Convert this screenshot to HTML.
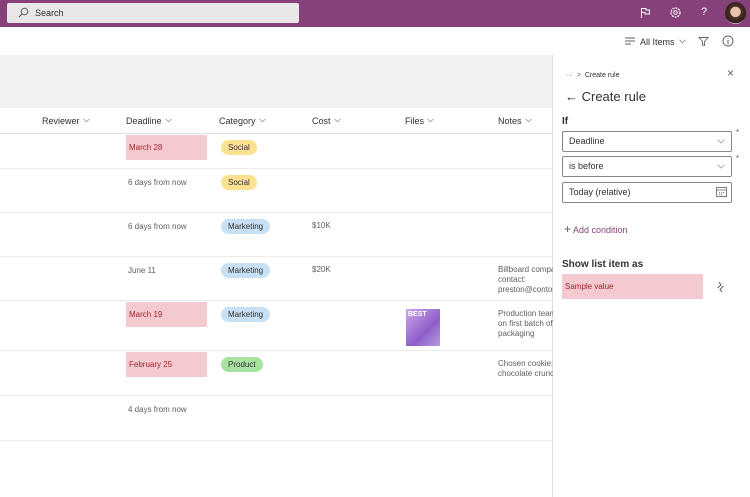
<!DOCTYPE html>
<html><head><meta charset="utf-8"><style>
*{margin:0;padding:0;box-sizing:border-box}
body{width:750px;height:497px;overflow:hidden;background:#fff;font-family:"Liberation Sans",sans-serif;position:relative;color:#323130}
.a{position:absolute}
.t{font-size:8px;color:#605e5c;position:absolute;white-space:nowrap}
.h{font-size:9px;color:#323130;position:absolute;white-space:nowrap}
.h svg{margin-left:3px;vertical-align:1px}
.line{position:absolute;left:0;width:552px;height:1px;background:#edebe9}
.pink{position:absolute;left:126px;width:81px;height:25px;background:#f4c9cf}
.pinkt{position:absolute;font-size:8px;color:#a4262c}
.pill{position:absolute;height:15px;border-radius:8px;font-size:8px;line-height:15px;padding:0 7px;color:#323130}
.y{background:#fce290}.b{background:#c7e0f4}.g{background:#a7e3a0}
.box{position:absolute;left:562px;width:170px;height:21px;border:1px solid #8a8886;border-radius:2px;font-size:9px;line-height:19px;padding-left:6px;color:#323130}
.chev{position:absolute;right:6px;top:7px}
</style></head><body>
<div class="a" style="left:0;top:0;width:750px;height:27px;background:#86407a"></div>
<div class="a" style="left:7px;top:3px;width:292px;height:20px;background:#e8e6e6;border-radius:2px"></div>
<svg class="a" style="left:18px;top:7px" width="11" height="11" viewBox="0 0 11 11"><circle cx="6.5" cy="4.5" r="3.3" fill="none" stroke="#605e5c" stroke-width="1"/><path d="M4 7 L1 10" stroke="#605e5c" stroke-width="1.1"/></svg>
<div class="a" style="left:35px;top:8px;font-size:9px;color:#323130">Search</div>
<svg class="a" style="left:640px;top:7px" width="11" height="12" viewBox="0 0 11 12"><path d="M1.5 1 V11 M1.5 1.5 H6 V3 H9.5 V7 H5 V5.5 H1.5" fill="none" stroke="#fff" stroke-width="1"/></svg>
<svg class="a" style="left:669px;top:6px" width="13" height="13" viewBox="0 0 13 13"><circle cx="6.5" cy="6.5" r="4.5" fill="none" stroke="#fff" stroke-width="1.3" stroke-dasharray="2 1"/><circle cx="6.5" cy="6.5" r="1.8" fill="none" stroke="#fff" stroke-width="1"/></svg>
<div class="a" style="left:701px;top:6px;font-size:11px;color:#fff">?</div>
<div class="a" style="left:725px;top:2px;width:21px;height:22px;border-radius:50%;background:radial-gradient(circle at 50% 45%,#e8c4b0 0 30%,#4a3028 35%,#2e1e18 70%,#ddd 72%)"></div>
<svg class="a" style="left:625px;top:37px" width="11" height="9" viewBox="0 0 11 9"><path d="M0 1H10M0 4H10M0 7H6" stroke="#605e5c" stroke-width="0.9"/></svg>
<div class="a" style="left:640px;top:37px;font-size:9px;color:#323130;white-space:nowrap">All Items <svg width="7" height="5" viewBox="0 0 7 5" style="margin-left:2px;vertical-align:1px"><path d="M0.5 0.8L3.5 3.8L6.5 0.8" fill="none" stroke="#8a8886" stroke-width="0.8"/></svg></div>
<svg class="a" style="left:698px;top:36px" width="11" height="11" viewBox="0 0 11 11"><path d="M1 1.5H10L6.5 5.5V9.5L4.5 9V5.5Z" fill="none" stroke="#605e5c" stroke-width="0.9"/></svg>
<svg class="a" style="left:722px;top:35px" width="12" height="12" viewBox="0 0 12 12"><circle cx="6" cy="6" r="5" fill="none" stroke="#605e5c" stroke-width="0.9"/><path d="M6 5V9M6 3.2V4" stroke="#605e5c"/></svg>
<div class="a" style="left:0;top:55px;width:552px;height:53px;background:#f3f2f1"></div>
<div class="a" style="left:552px;top:55px;width:1px;height:442px;background:#e1dfdd"></div>
<div class="h" style="left:42px;top:116px">Reviewer<svg width="7" height="5" viewBox="0 0 7 5"><path d="M0.5 0.8L3.5 3.8L6.5 0.8" fill="none" stroke="#a19f9d" stroke-width="0.8"/></svg></div>
<div class="h" style="left:126px;top:116px">Deadline<svg width="7" height="5" viewBox="0 0 7 5"><path d="M0.5 0.8L3.5 3.8L6.5 0.8" fill="none" stroke="#a19f9d" stroke-width="0.8"/></svg></div>
<div class="h" style="left:219px;top:116px">Category<svg width="7" height="5" viewBox="0 0 7 5"><path d="M0.5 0.8L3.5 3.8L6.5 0.8" fill="none" stroke="#a19f9d" stroke-width="0.8"/></svg></div>
<div class="h" style="left:312px;top:116px">Cost<svg width="7" height="5" viewBox="0 0 7 5"><path d="M0.5 0.8L3.5 3.8L6.5 0.8" fill="none" stroke="#a19f9d" stroke-width="0.8"/></svg></div>
<div class="h" style="left:405px;top:116px">Files<svg width="7" height="5" viewBox="0 0 7 5"><path d="M0.5 0.8L3.5 3.8L6.5 0.8" fill="none" stroke="#a19f9d" stroke-width="0.8"/></svg></div>
<div class="h" style="left:498px;top:116px">Notes<svg width="7" height="5" viewBox="0 0 7 5"><path d="M0.5 0.8L3.5 3.8L6.5 0.8" fill="none" stroke="#a19f9d" stroke-width="0.8"/></svg></div>
<div class="line" style="top:133px;background:#e1dfdd"></div>
<div class="line" style="top:168px"></div><div class="line" style="top:212px"></div><div class="line" style="top:256px"></div><div class="line" style="top:300px"></div><div class="line" style="top:350px"></div><div class="line" style="top:395px"></div><div class="line" style="top:440px"></div>
<div class="pink" style="top:135px"></div><div class="pinkt" style="left:129px;top:143px">March 28</div>
<div class="pill y" style="left:221px;top:140px">Social</div>
<div class="t" style="left:128px;top:178px">6 days from now</div>
<div class="pill y" style="left:221px;top:175px">Social</div>
<div class="t" style="left:128px;top:222px">6 days from now</div>
<div class="pill b" style="left:221px;top:219px">Marketing</div>
<div class="t" style="left:312px;top:221px">$10K</div>
<div class="t" style="left:128px;top:266px">June 11</div>
<div class="pill b" style="left:221px;top:263px">Marketing</div>
<div class="t" style="left:312px;top:265px">$20K</div>
<div class="t" style="left:498px;top:265px;line-height:10px">Billboard compa<br>contact:<br>preston@contos</div>
<div class="pink" style="top:302px"></div><div class="pinkt" style="left:129px;top:310px">March 19</div>
<div class="pill b" style="left:221px;top:307px">Marketing</div>
<div class="a" style="left:406px;top:309px;width:34px;height:37px;background:linear-gradient(135deg,#c9a8e8,#8e5fc9 60%,#b89be0);color:#fff;font-size:7px;font-weight:bold;padding:2px">BEST</div>
<div class="t" style="left:498px;top:309px;line-height:10px">Production team<br>on first batch of<br>packaging</div>
<div class="pink" style="top:352px"></div><div class="pinkt" style="left:129px;top:360px">February 25</div>
<div class="pill g" style="left:221px;top:357px">Product</div>
<div class="t" style="left:498px;top:359px;line-height:10px">Chosen cookie: I<br>chocolate crunc</div>
<div class="t" style="left:128px;top:405px">4 days from now</div>
<div class="a" style="left:553px;top:55px;width:197px;height:442px;background:#fff"></div>
<div class="a" style="left:566px;top:72px;font-size:7px;color:#323130;white-space:nowrap"><span style="color:#605e5c">···&nbsp;&nbsp;&gt;&nbsp;&nbsp;</span>Create rule</div>
<div class="a" style="left:727px;top:66px;font-size:12px;color:#605e5c">×</div>
<div class="a" style="left:565px;top:89px;font-size:13px;color:#323130">← Create rule</div>
<div class="a" style="left:562px;top:116px;font-size:10px;font-weight:bold;color:#323130">If</div>
<div class="box" style="top:131px">Deadline<svg class="chev" width="8" height="5" viewBox="0 0 8 5"><path d="M0.5 0.5L4 4L7.5 0.5" fill="none" stroke="#a19f9d" stroke-width="0.8"/></svg></div><div class="a" style="left:736px;top:128px;font-size:8px;color:#605e5c">*</div>
<div class="box" style="top:156px">is before<svg class="chev" width="8" height="5" viewBox="0 0 8 5"><path d="M0.5 0.5L4 4L7.5 0.5" fill="none" stroke="#a19f9d" stroke-width="0.8"/></svg></div><div class="a" style="left:736px;top:154px;font-size:8px;color:#605e5c">*</div>
<div class="box" style="top:182px">Today (relative)
<svg class="a" style="right:4px;top:4px" width="11" height="10" viewBox="0 0 11 10"><rect x="0.5" y="0.5" width="10" height="9" fill="none" stroke="#605e5c" stroke-width="0.8"/><path d="M0.5 3H10.5M3 5.5H4M5 5.5H6M7 5.5H8M3 7.5H4M5 7.5H6" stroke="#605e5c" stroke-width="0.8"/></svg></div>
<div class="a" style="left:564px;top:222px;font-size:9px;color:#86407a;white-space:nowrap"><span style="font-size:12px;color:#605e5c">+</span> Add condition</div>
<div class="a" style="left:562px;top:259px;font-size:10px;font-weight:bold;color:#323130">Show list item as</div>
<div class="a" style="left:562px;top:274px;width:141px;height:25px;background:#f4c9cf;font-size:8px;color:#a4262c;line-height:25px;padding-left:3px">Sample value</div>
<svg class="a" style="left:716px;top:281px" width="9" height="12" viewBox="0 0 9 12"><path d="M3 1L5 4L1.5 7M7.5 5L4 8.5L6 11" fill="none" stroke="#605e5c" stroke-width="1"/></svg>
</body></html>
